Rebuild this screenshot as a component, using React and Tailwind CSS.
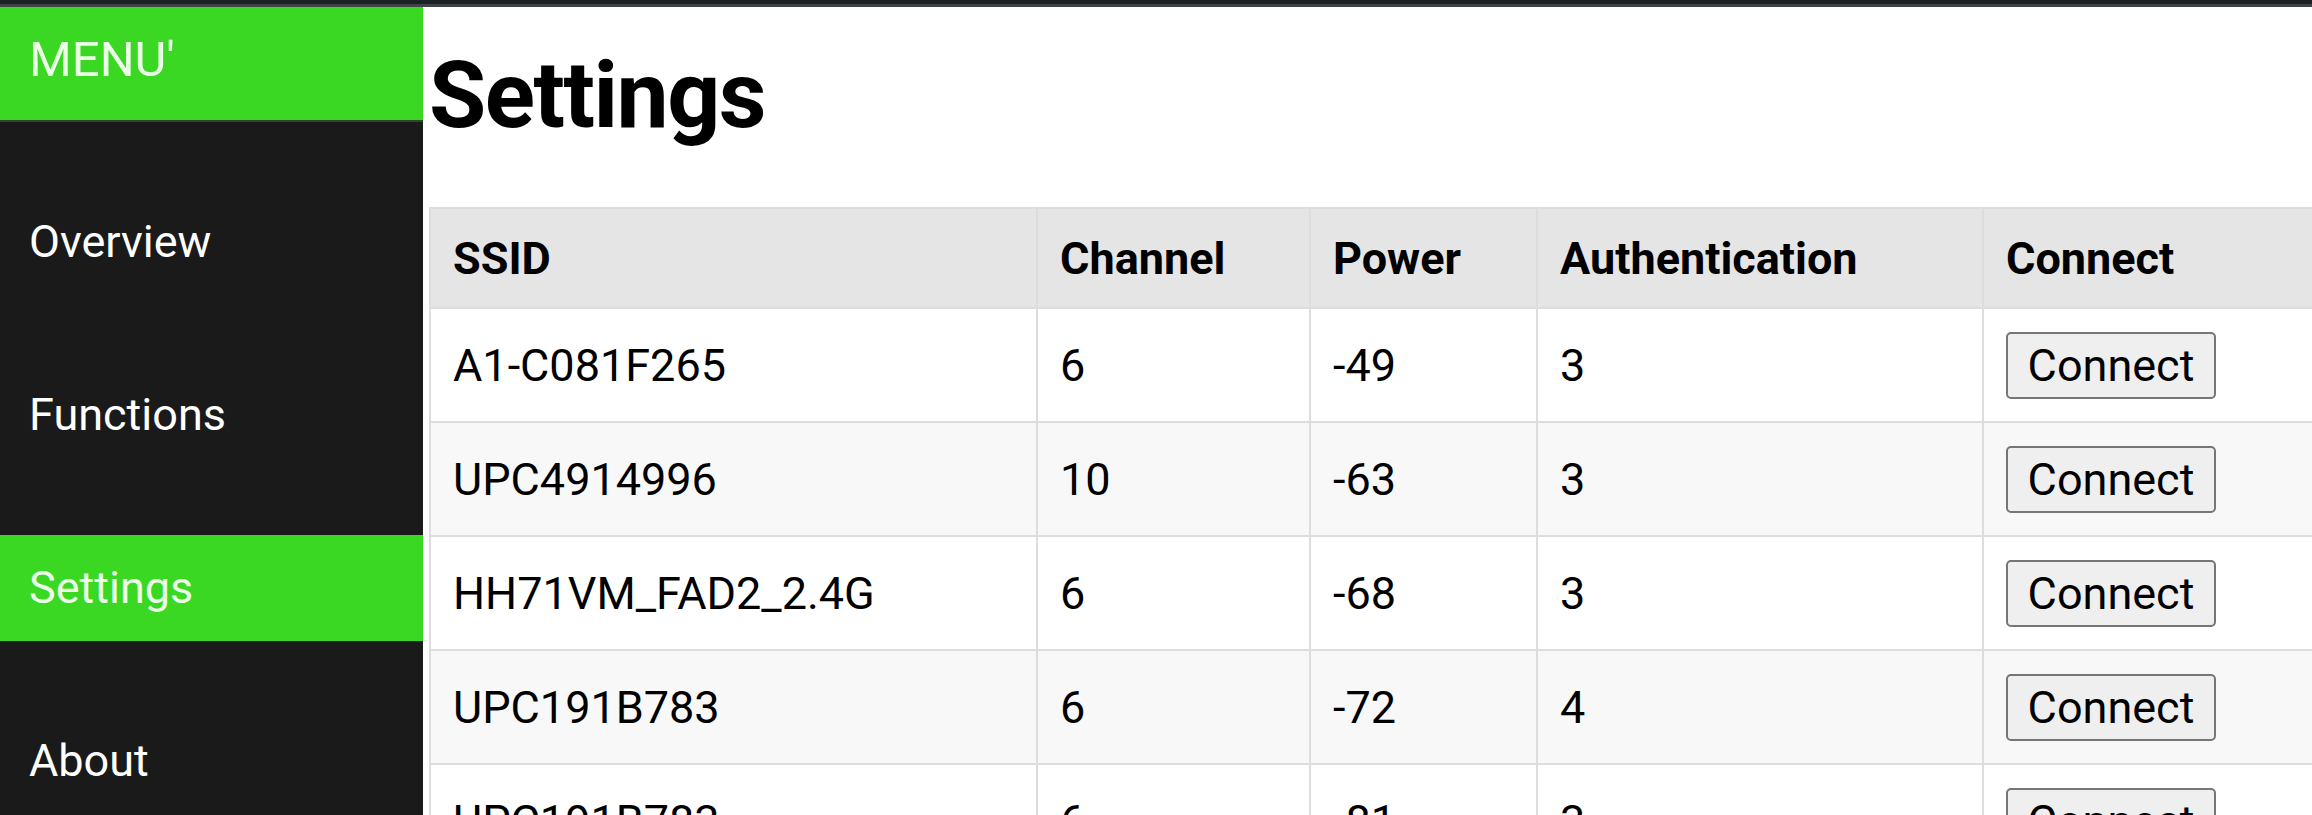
import React from "react";

const rows = [
  ["A1-C081F265", "6", "-49", "3"],
  ["UPC4914996", "10", "-63", "3"],
  ["HH71VM_FAD2_2.4G", "6", "-68", "3"],
  ["UPC191B783", "6", "-72", "4"],
  ["UPC191B783", "6", "-81", "3"],
];

const navItems = ["Overview", "Functions", "Settings", "About"];

export default function App() {
  return (
    <div className="w-[2312px] h-[815px] overflow-hidden flex flex-col bg-white font-['Roboto',sans-serif] text-black">
      <div className="h-[4px] bg-[#1c2125] shrink-0" />
      <div className="h-[3px] bg-[#3d4347] shrink-0" />
      <div className="flex flex-1 min-h-0">
        <aside className="w-[423px] shrink-0 bg-[#1a1a1a] flex flex-col">
          <div className="h-[115px] shrink-0 bg-[#3ad723] border-b-2 border-[#2f472c] pl-[29px] pt-[24px] text-[49px] leading-[normal] text-[#eaffe6]">
            MENU'
          </div>
          <nav className="flex flex-col gap-[67px] pt-[67px]">
            {navItems.map((item) => (
              <div
                key={item}
                className={
                  item === "Settings"
                    ? "h-[106px] shrink-0 flex items-center px-[29px] text-[45px] bg-[#3ad723] text-[#eaffe6]"
                    : "h-[106px] shrink-0 flex items-center px-[29px] text-[45px] text-white"
                }
              >
                {item}
              </div>
            ))}
          </nav>
        </aside>
        <main className="flex-1 min-w-0 overflow-hidden pl-[6px]">
          <h1 className="mt-[42px] text-[93px] font-bold leading-none tracking-[-1.5px]">Settings</h1>
          <table className="mt-[65px] w-[1900px] table-fixed border-collapse border-2 border-[#dddddd]">
            <colgroup>
              <col className="w-[607px]" />
              <col className="w-[273px]" />
              <col className="w-[227px]" />
              <col className="w-[446px]" />
              <col />
            </colgroup>
            <thead>
              <tr className="h-[100px] bg-[#e5e5e5]">
                {["SSID", "Channel", "Power", "Authentication", "Connect"].map((h) => (
                  <th
                    key={h}
                    className="border-2 border-[#dddddd] px-[22px] text-left align-middle text-[45px] font-bold leading-[normal]"
                  >
                    {h}
                  </th>
                ))}
              </tr>
            </thead>
            <tbody>
              {rows.map((r, i) => (
                <tr key={i} className={i % 2 === 1 ? "h-[114px] bg-[#f8f8f8]" : "h-[114px] bg-white"}>
                  {r.map((c, j) => (
                    <td
                      key={j}
                      className="border-2 border-[#dddddd] px-[22px] align-middle text-[45px] leading-[normal]"
                    >
                      {c}
                    </td>
                  ))}
                  <td className="border-2 border-[#dddddd] px-[22px] align-middle">
                    <button className="h-[67px] w-[210px] rounded-[5px] border-2 border-[#767676] bg-[#efefef] text-[45px] leading-none text-black font-['Roboto',sans-serif]">
                      Connect
                    </button>
                  </td>
                </tr>
              ))}
            </tbody>
          </table>
        </main>
      </div>
    </div>
  );
}
